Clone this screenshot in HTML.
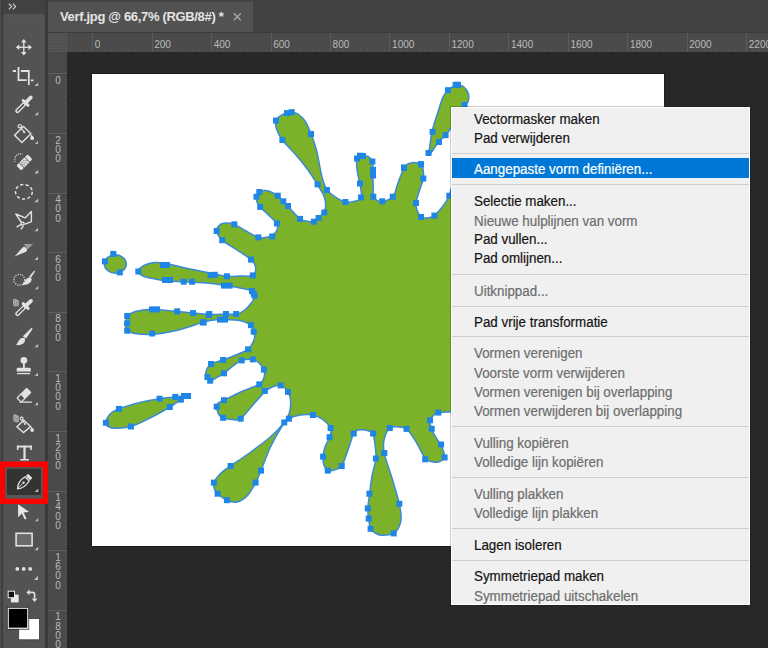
<!DOCTYPE html>
<html><head><meta charset="utf-8"><style>
*{margin:0;padding:0;box-sizing:border-box}
html,body{width:768px;height:648px;overflow:hidden;background:#282828;font-family:"Liberation Sans",sans-serif;position:relative}
.a{position:absolute}
#tabbar{left:48px;top:0;width:720px;height:32px;background:#424242}
#tab{left:48px;top:2px;width:205px;height:30px;background:#525252}
#title{left:60px;top:0;height:32px;line-height:33px;font-weight:bold;font-size:13px;letter-spacing:-0.33px;color:#e4e4e4;white-space:nowrap}
#hr{left:48px;top:32px;width:720px;height:20px;background:#4a4a4a;border-top:1px solid #3c3c3c;overflow:hidden}
#corner{left:48px;top:33px;width:19px;height:19px;background:#4f4f4f;background-image:repeating-linear-gradient(90deg,rgba(255,255,255,0.03) 0 1px,transparent 1px 3px),repeating-linear-gradient(0deg,rgba(255,255,255,0.03) 0 1px,transparent 1px 3px)}
#vr{left:48px;top:52px;width:19px;height:596px;background:#4a4a4a;overflow:hidden}
.ht{position:absolute;top:0;width:1px;height:20px;background:#5c5c5c}
.hm{position:absolute;bottom:0;width:1px;background:#555}
.hl{position:absolute;top:6px;font-size:10px;line-height:11px;color:#bcbcbc}
.vt{position:absolute;left:0;height:1px;width:19px;background:#5e5e5e}
.vm{position:absolute;right:0;height:1px;background:#555}
.vl{position:absolute;left:7px;width:6px;text-align:center;font-size:10px;line-height:9.3px;color:#bcbcbc}
#doc{left:92px;top:74px;width:572px;height:472px;background:#fff;box-shadow:0 0 0 1px #1e1e1e}
#menu{left:450px;top:106px;width:301px;height:500px;background:#f0f0f0;border:1px solid rgba(0,0,0,0.2);background-clip:padding-box;box-shadow:inset 0 0 0 1px #fff}
.i{position:absolute;left:23px;height:19px;line-height:19px;font-size:14px;color:#141414;white-space:nowrap;transform:scaleX(0.955);transform-origin:0 0;-webkit-text-stroke:0.2px currentColor}
.d{color:#6d6d6d}
.h{color:#fff}
#hl{left:1px;top:51px;width:297px;height:20px;background:#0078d7}
.s{position:absolute;left:1px;width:297px;height:1px;background:#cdcdcd}

</style></head><body>
<div class="a" id="tabbar"></div>
<div class="a" id="tab"></div>
<div class="a" id="title">Verf.jpg @ 66,7% (RGB/8#) *</div>
<svg class="a" style="left:232px;top:12px" width="11" height="10"><path d="M1.8,1.3L8.8,8.3M8.8,1.3L1.8,8.3" stroke="#a9a9a9" stroke-width="1.3"/></svg>
<div class="a" id="hr"><div class="ht" style="left:44.2px"></div><div class="hl" style="left:46.8px">0</div><div class="ht" style="left:103.7px"></div><div class="hl" style="left:106.2px">200</div><div class="ht" style="left:163.1px"></div><div class="hl" style="left:165.7px">400</div><div class="ht" style="left:222.6px"></div><div class="hl" style="left:225.2px">600</div><div class="ht" style="left:282.0px"></div><div class="hl" style="left:284.6px">800</div><div class="ht" style="left:341.4px"></div><div class="hl" style="left:344.1px">1000</div><div class="ht" style="left:400.9px"></div><div class="hl" style="left:403.5px">1200</div><div class="ht" style="left:460.4px"></div><div class="hl" style="left:463.0px">1400</div><div class="ht" style="left:519.8px"></div><div class="hl" style="left:522.4px">1600</div><div class="ht" style="left:579.3px"></div><div class="hl" style="left:581.9px">1800</div><div class="ht" style="left:638.7px"></div><div class="hl" style="left:641.3px">2000</div><div class="ht" style="left:698.2px"></div><div class="hl" style="left:700.8px">2200</div><div class="hm" style="left:20.4px;height:2.5px"></div><div class="hm" style="left:26.4px;height:2.5px"></div><div class="hm" style="left:32.3px;height:2.5px"></div><div class="hm" style="left:38.3px;height:2.5px"></div><div class="hm" style="left:50.1px;height:2.5px"></div><div class="hm" style="left:56.1px;height:2.5px"></div><div class="hm" style="left:62.0px;height:2.5px"></div><div class="hm" style="left:68.0px;height:2.5px"></div><div class="hm" style="left:73.9px;height:4px"></div><div class="hm" style="left:79.9px;height:2.5px"></div><div class="hm" style="left:85.8px;height:2.5px"></div><div class="hm" style="left:91.8px;height:2.5px"></div><div class="hm" style="left:97.7px;height:2.5px"></div><div class="hm" style="left:109.6px;height:2.5px"></div><div class="hm" style="left:115.5px;height:2.5px"></div><div class="hm" style="left:121.5px;height:2.5px"></div><div class="hm" style="left:127.4px;height:2.5px"></div><div class="hm" style="left:133.4px;height:4px"></div><div class="hm" style="left:139.3px;height:2.5px"></div><div class="hm" style="left:145.3px;height:2.5px"></div><div class="hm" style="left:151.2px;height:2.5px"></div><div class="hm" style="left:157.2px;height:2.5px"></div><div class="hm" style="left:169.0px;height:2.5px"></div><div class="hm" style="left:175.0px;height:2.5px"></div><div class="hm" style="left:180.9px;height:2.5px"></div><div class="hm" style="left:186.9px;height:2.5px"></div><div class="hm" style="left:192.8px;height:4px"></div><div class="hm" style="left:198.8px;height:2.5px"></div><div class="hm" style="left:204.7px;height:2.5px"></div><div class="hm" style="left:210.7px;height:2.5px"></div><div class="hm" style="left:216.6px;height:2.5px"></div><div class="hm" style="left:228.5px;height:2.5px"></div><div class="hm" style="left:234.4px;height:2.5px"></div><div class="hm" style="left:240.4px;height:2.5px"></div><div class="hm" style="left:246.3px;height:2.5px"></div><div class="hm" style="left:252.3px;height:4px"></div><div class="hm" style="left:258.2px;height:2.5px"></div><div class="hm" style="left:264.2px;height:2.5px"></div><div class="hm" style="left:270.1px;height:2.5px"></div><div class="hm" style="left:276.1px;height:2.5px"></div><div class="hm" style="left:287.9px;height:2.5px"></div><div class="hm" style="left:293.9px;height:2.5px"></div><div class="hm" style="left:299.8px;height:2.5px"></div><div class="hm" style="left:305.8px;height:2.5px"></div><div class="hm" style="left:311.7px;height:4px"></div><div class="hm" style="left:317.7px;height:2.5px"></div><div class="hm" style="left:323.6px;height:2.5px"></div><div class="hm" style="left:329.6px;height:2.5px"></div><div class="hm" style="left:335.5px;height:2.5px"></div><div class="hm" style="left:347.4px;height:2.5px"></div><div class="hm" style="left:353.3px;height:2.5px"></div><div class="hm" style="left:359.3px;height:2.5px"></div><div class="hm" style="left:365.2px;height:2.5px"></div><div class="hm" style="left:371.2px;height:4px"></div><div class="hm" style="left:377.1px;height:2.5px"></div><div class="hm" style="left:383.1px;height:2.5px"></div><div class="hm" style="left:389.0px;height:2.5px"></div><div class="hm" style="left:395.0px;height:2.5px"></div><div class="hm" style="left:406.8px;height:2.5px"></div><div class="hm" style="left:412.8px;height:2.5px"></div><div class="hm" style="left:418.7px;height:2.5px"></div><div class="hm" style="left:424.7px;height:2.5px"></div><div class="hm" style="left:430.6px;height:4px"></div><div class="hm" style="left:436.6px;height:2.5px"></div><div class="hm" style="left:442.5px;height:2.5px"></div><div class="hm" style="left:448.5px;height:2.5px"></div><div class="hm" style="left:454.4px;height:2.5px"></div><div class="hm" style="left:466.3px;height:2.5px"></div><div class="hm" style="left:472.2px;height:2.5px"></div><div class="hm" style="left:478.2px;height:2.5px"></div><div class="hm" style="left:484.1px;height:2.5px"></div><div class="hm" style="left:490.1px;height:4px"></div><div class="hm" style="left:496.0px;height:2.5px"></div><div class="hm" style="left:502.0px;height:2.5px"></div><div class="hm" style="left:507.9px;height:2.5px"></div><div class="hm" style="left:513.9px;height:2.5px"></div><div class="hm" style="left:525.7px;height:2.5px"></div><div class="hm" style="left:531.7px;height:2.5px"></div><div class="hm" style="left:537.6px;height:2.5px"></div><div class="hm" style="left:543.6px;height:2.5px"></div><div class="hm" style="left:549.5px;height:4px"></div><div class="hm" style="left:555.5px;height:2.5px"></div><div class="hm" style="left:561.4px;height:2.5px"></div><div class="hm" style="left:567.4px;height:2.5px"></div><div class="hm" style="left:573.3px;height:2.5px"></div><div class="hm" style="left:585.2px;height:2.5px"></div><div class="hm" style="left:591.1px;height:2.5px"></div><div class="hm" style="left:597.1px;height:2.5px"></div><div class="hm" style="left:603.0px;height:2.5px"></div><div class="hm" style="left:609.0px;height:4px"></div><div class="hm" style="left:614.9px;height:2.5px"></div><div class="hm" style="left:620.9px;height:2.5px"></div><div class="hm" style="left:626.8px;height:2.5px"></div><div class="hm" style="left:632.8px;height:2.5px"></div><div class="hm" style="left:644.6px;height:2.5px"></div><div class="hm" style="left:650.6px;height:2.5px"></div><div class="hm" style="left:656.5px;height:2.5px"></div><div class="hm" style="left:662.5px;height:2.5px"></div><div class="hm" style="left:668.4px;height:4px"></div><div class="hm" style="left:674.4px;height:2.5px"></div><div class="hm" style="left:680.3px;height:2.5px"></div><div class="hm" style="left:686.3px;height:2.5px"></div><div class="hm" style="left:692.2px;height:2.5px"></div><div class="hm" style="left:704.1px;height:2.5px"></div><div class="hm" style="left:710.0px;height:2.5px"></div><div class="hm" style="left:716.0px;height:2.5px"></div></div>
<div class="a" id="corner"></div>
<div class="a" id="vr"><div class="vt" style="top:21.3px"></div><div class="vl" style="top:23.9px">0</div><div class="vm" style="top:27.3px;width:2.5px"></div><div class="vm" style="top:33.2px;width:2.5px"></div><div class="vm" style="top:39.2px;width:2.5px"></div><div class="vm" style="top:45.1px;width:2.5px"></div><div class="vm" style="top:51.1px;width:4px"></div><div class="vm" style="top:57.1px;width:2.5px"></div><div class="vm" style="top:63.0px;width:2.5px"></div><div class="vm" style="top:69.0px;width:2.5px"></div><div class="vm" style="top:74.9px;width:2.5px"></div><div class="vt" style="top:80.9px"></div><div class="vl" style="top:83.5px">2<br>0<br>0</div><div class="vm" style="top:86.9px;width:2.5px"></div><div class="vm" style="top:92.8px;width:2.5px"></div><div class="vm" style="top:98.8px;width:2.5px"></div><div class="vm" style="top:104.7px;width:2.5px"></div><div class="vm" style="top:110.7px;width:4px"></div><div class="vm" style="top:116.7px;width:2.5px"></div><div class="vm" style="top:122.6px;width:2.5px"></div><div class="vm" style="top:128.6px;width:2.5px"></div><div class="vm" style="top:134.5px;width:2.5px"></div><div class="vt" style="top:140.5px"></div><div class="vl" style="top:143.1px">4<br>0<br>0</div><div class="vm" style="top:146.5px;width:2.5px"></div><div class="vm" style="top:152.4px;width:2.5px"></div><div class="vm" style="top:158.4px;width:2.5px"></div><div class="vm" style="top:164.3px;width:2.5px"></div><div class="vm" style="top:170.3px;width:4px"></div><div class="vm" style="top:176.3px;width:2.5px"></div><div class="vm" style="top:182.2px;width:2.5px"></div><div class="vm" style="top:188.2px;width:2.5px"></div><div class="vm" style="top:194.1px;width:2.5px"></div><div class="vt" style="top:200.1px"></div><div class="vl" style="top:202.7px">6<br>0<br>0</div><div class="vm" style="top:206.1px;width:2.5px"></div><div class="vm" style="top:212.0px;width:2.5px"></div><div class="vm" style="top:218.0px;width:2.5px"></div><div class="vm" style="top:223.9px;width:2.5px"></div><div class="vm" style="top:229.9px;width:4px"></div><div class="vm" style="top:235.9px;width:2.5px"></div><div class="vm" style="top:241.8px;width:2.5px"></div><div class="vm" style="top:247.8px;width:2.5px"></div><div class="vm" style="top:253.7px;width:2.5px"></div><div class="vt" style="top:259.7px"></div><div class="vl" style="top:262.3px">8<br>0<br>0</div><div class="vm" style="top:265.7px;width:2.5px"></div><div class="vm" style="top:271.6px;width:2.5px"></div><div class="vm" style="top:277.6px;width:2.5px"></div><div class="vm" style="top:283.5px;width:2.5px"></div><div class="vm" style="top:289.5px;width:4px"></div><div class="vm" style="top:295.5px;width:2.5px"></div><div class="vm" style="top:301.4px;width:2.5px"></div><div class="vm" style="top:307.4px;width:2.5px"></div><div class="vm" style="top:313.3px;width:2.5px"></div><div class="vt" style="top:319.3px"></div><div class="vl" style="top:321.9px">1<br>0<br>0<br>0</div><div class="vm" style="top:325.3px;width:2.5px"></div><div class="vm" style="top:331.2px;width:2.5px"></div><div class="vm" style="top:337.2px;width:2.5px"></div><div class="vm" style="top:343.1px;width:2.5px"></div><div class="vm" style="top:349.1px;width:4px"></div><div class="vm" style="top:355.1px;width:2.5px"></div><div class="vm" style="top:361.0px;width:2.5px"></div><div class="vm" style="top:367.0px;width:2.5px"></div><div class="vm" style="top:372.9px;width:2.5px"></div><div class="vt" style="top:378.9px"></div><div class="vl" style="top:381.5px">1<br>2<br>0<br>0</div><div class="vm" style="top:384.9px;width:2.5px"></div><div class="vm" style="top:390.8px;width:2.5px"></div><div class="vm" style="top:396.8px;width:2.5px"></div><div class="vm" style="top:402.7px;width:2.5px"></div><div class="vm" style="top:408.7px;width:4px"></div><div class="vm" style="top:414.7px;width:2.5px"></div><div class="vm" style="top:420.6px;width:2.5px"></div><div class="vm" style="top:426.6px;width:2.5px"></div><div class="vm" style="top:432.5px;width:2.5px"></div><div class="vt" style="top:438.5px"></div><div class="vl" style="top:441.1px">1<br>4<br>0<br>0</div><div class="vm" style="top:444.5px;width:2.5px"></div><div class="vm" style="top:450.4px;width:2.5px"></div><div class="vm" style="top:456.4px;width:2.5px"></div><div class="vm" style="top:462.3px;width:2.5px"></div><div class="vm" style="top:468.3px;width:4px"></div><div class="vm" style="top:474.3px;width:2.5px"></div><div class="vm" style="top:480.2px;width:2.5px"></div><div class="vm" style="top:486.2px;width:2.5px"></div><div class="vm" style="top:492.1px;width:2.5px"></div><div class="vt" style="top:498.1px"></div><div class="vl" style="top:500.7px">1<br>6<br>0<br>0</div><div class="vm" style="top:504.1px;width:2.5px"></div><div class="vm" style="top:510.0px;width:2.5px"></div><div class="vm" style="top:516.0px;width:2.5px"></div><div class="vm" style="top:521.9px;width:2.5px"></div><div class="vm" style="top:527.9px;width:4px"></div><div class="vm" style="top:533.9px;width:2.5px"></div><div class="vm" style="top:539.8px;width:2.5px"></div><div class="vm" style="top:545.8px;width:2.5px"></div><div class="vm" style="top:551.7px;width:2.5px"></div><div class="vt" style="top:557.7px"></div><div class="vl" style="top:560.3px">1<br>8<br>0<br>0</div><div class="vm" style="top:563.7px;width:2.5px"></div><div class="vm" style="top:569.6px;width:2.5px"></div><div class="vm" style="top:575.6px;width:2.5px"></div><div class="vm" style="top:581.5px;width:2.5px"></div><div class="vm" style="top:587.5px;width:4px"></div><div class="vm" style="top:593.5px;width:2.5px"></div><div class="vm" style="top:599.4px;width:2.5px"></div><div class="vm" style="top:605.4px;width:2.5px"></div><div class="vm" style="top:611.3px;width:2.5px"></div></div>
<div class="a" id="doc"></div>
<svg class="a" id="splat" style="left:0;top:0" width="768" height="648"><path d="M470.0,186.0C467.5,148.5 458.2,185.5 455.0,186.0C451.8,186.5 451.9,187.4 451.0,189.0C450.1,190.6 450.6,192.9 449.3,195.7C448.0,198.5 445.5,202.7 443.0,206.0C440.5,209.3 437.1,213.6 434.4,215.6C431.7,217.6 429.2,217.8 427.0,218.0C424.8,218.2 422.7,218.3 421.0,217.0C419.3,215.7 417.8,212.3 417.0,210.0C416.2,207.7 415.7,206.0 416.0,203.0C416.3,200.0 417.8,196.1 419.0,192.0C420.2,187.9 422.6,182.3 423.3,178.5C424.0,174.7 423.4,171.4 423.0,169.0C422.6,166.6 422.5,165.4 421.0,164.3C419.5,163.2 416.2,162.5 414.0,162.4C411.8,162.3 409.7,163.1 408.0,164.0C406.3,164.9 405.7,164.8 404.0,168.0C402.3,171.2 399.9,178.2 398.0,183.0C396.1,187.8 395.4,193.6 392.8,196.7C390.2,199.8 385.2,200.9 382.2,201.3C379.2,201.7 376.5,200.4 375.0,199.0C373.5,197.6 373.6,196.9 373.3,193.0C373.0,189.1 373.1,180.7 373.0,175.4C372.9,170.2 373.2,164.7 372.4,161.5C371.6,158.3 369.6,157.4 368.0,156.5C366.4,155.6 364.4,156.1 363.0,156.0C361.6,155.9 360.4,155.4 359.4,156.0C358.3,156.6 357.1,157.3 356.7,159.5C356.3,161.7 356.6,165.6 357.0,169.0C357.4,172.4 358.4,177.2 359.0,180.0C359.6,182.8 360.0,183.1 360.4,186.0C360.8,188.9 362.0,195.1 361.3,197.6C360.6,200.1 358.6,200.3 356.0,201.0C353.4,201.7 348.8,202.7 345.4,202.0C342.0,201.3 338.5,199.1 335.4,197.0C332.3,194.9 329.0,192.9 326.8,189.6C324.6,186.3 323.7,183.4 322.0,177.0C320.3,170.6 318.5,158.2 316.7,151.0C314.9,143.8 312.9,139.0 311.0,134.0C309.1,129.0 307.2,124.3 305.0,121.0C302.8,117.7 300.2,115.5 298.0,114.0C295.8,112.5 293.5,112.4 291.7,112.2C289.9,112.0 288.9,112.4 287.0,113.0C285.1,113.6 281.8,114.7 280.0,116.0C278.2,117.3 276.6,118.4 276.0,120.6C275.4,122.8 275.4,125.8 276.5,129.0C277.6,132.2 279.1,135.7 282.4,140.0C285.6,144.3 291.7,150.0 296.0,155.0C300.3,160.0 304.4,165.1 308.0,170.0C311.6,174.9 314.8,180.2 317.5,184.7C320.2,189.2 322.9,193.3 324.3,197.0C325.7,200.7 325.8,204.3 325.6,207.0C325.4,209.7 324.1,211.2 323.0,213.0C321.9,214.8 320.2,216.6 318.8,218.0C317.4,219.4 316.5,221.2 314.4,221.7C312.3,222.2 308.5,221.5 306.0,221.0C303.5,220.5 302.7,221.2 299.6,218.6C296.5,216.0 290.1,208.6 287.3,205.7C284.5,202.8 284.6,203.1 283.0,201.4C281.4,199.8 279.6,197.5 277.4,195.8C275.2,194.2 272.2,192.4 270.0,191.5C267.8,190.6 265.8,190.4 264.0,190.5C262.2,190.6 260.6,191.0 259.3,192.0C258.1,193.0 256.9,195.0 256.5,196.7C256.1,198.4 256.4,200.3 257.0,202.0C257.6,203.7 258.2,204.7 260.2,206.9C262.2,209.2 266.2,212.7 269.0,215.5C271.8,218.3 275.6,221.1 276.9,223.5C278.2,225.9 277.7,228.0 277.0,230.0C276.3,232.0 274.5,234.1 272.5,235.3C270.5,236.6 267.4,237.2 265.0,237.5C262.6,237.8 261.5,238.5 258.3,237.4C255.1,236.3 250.0,233.2 246.0,231.0C242.0,228.8 237.6,225.7 234.3,224.4C231.0,223.1 228.3,223.0 226.0,223.0C223.7,223.0 222.0,223.1 220.4,224.4C218.8,225.7 216.4,228.4 216.7,231.0C217.0,233.6 218.8,237.0 222.2,240.2C225.6,243.4 232.2,246.8 237.0,250.0C241.8,253.2 247.9,256.8 251.0,259.6C254.1,262.4 255.3,264.4 255.6,267.0C255.9,269.6 255.4,273.9 252.8,275.4C250.2,276.9 244.3,275.9 240.0,276.0C235.7,276.1 231.6,276.8 226.9,276.3C222.2,275.9 216.5,274.2 212.0,273.3C207.5,272.4 204.6,271.9 200.0,271.0C195.4,270.1 190.3,269.1 184.6,267.8C178.9,266.6 170.9,264.4 166.0,263.5C161.1,262.6 158.1,262.4 155.0,262.5C151.9,262.6 150.1,263.1 147.6,264.0C145.1,264.9 141.6,266.8 140.0,268.0C138.4,269.2 138.1,270.3 138.3,271.5C138.5,272.7 139.4,274.0 141.0,275.0C142.6,276.0 143.4,276.6 147.6,277.5C151.8,278.4 160.0,280.0 166.0,280.7C172.0,281.4 179.4,281.4 183.7,281.7C188.0,281.9 187.3,281.9 192.0,282.2C196.7,282.5 206.7,282.9 212.0,283.5C217.3,284.1 221.1,285.2 224.0,285.6C226.9,286.0 226.9,285.6 229.6,286.0C232.3,286.4 236.3,287.2 240.0,288.0C243.7,288.8 249.5,289.7 251.9,291.0C254.3,292.3 254.3,294.5 254.6,295.7C254.9,296.9 254.0,297.1 253.7,298.0C253.4,298.9 254.1,299.2 252.8,301.0C251.5,302.8 248.6,306.8 246.0,309.0C243.4,311.2 240.3,313.2 237.0,314.0C233.7,314.8 230.2,313.9 226.0,314.0C221.8,314.1 217.3,314.6 212.0,314.5C206.7,314.4 199.7,313.6 193.9,313.1C188.1,312.6 183.7,311.9 177.2,311.3C170.7,310.7 159.9,309.7 155.0,309.4C150.1,309.1 151.1,309.2 147.6,309.6C144.1,310.0 137.3,310.9 134.0,312.0C130.7,313.1 129.4,314.1 128.0,316.0C126.5,317.9 125.4,321.0 125.3,323.3C125.2,325.6 125.6,328.3 127.2,330.0C128.8,331.7 130.8,332.8 135.0,333.5C139.2,334.2 145.5,334.9 152.2,334.4C158.9,333.9 166.8,332.7 175.3,330.7C183.8,328.7 196.9,324.1 203.0,322.4C209.1,320.6 208.8,320.7 212.0,320.2C215.2,319.7 218.4,319.6 222.2,319.6C226.0,319.6 231.4,319.7 235.0,320.0C238.6,320.3 240.8,320.6 243.5,321.5C246.2,322.4 249.2,323.5 250.9,325.2C252.6,326.9 253.1,329.6 253.7,331.7C254.3,333.8 254.9,335.9 254.6,338.0C254.3,340.1 253.1,342.1 252.0,344.0C250.9,345.9 250.8,347.5 248.1,349.3C245.4,351.1 240.2,353.2 236.0,355.0C231.8,356.8 227.2,358.5 223.1,360.0C218.9,361.5 213.8,362.5 211.1,364.0C208.4,365.5 207.9,367.2 207.0,369.0C206.1,370.8 205.5,373.5 205.6,375.0C205.7,376.5 206.6,377.1 207.4,378.0C208.2,378.9 208.8,380.7 210.2,380.7C211.6,380.7 213.7,379.2 216.0,378.0C218.3,376.8 221.2,375.3 224.0,373.3C226.8,371.3 230.1,368.1 233.0,366.0C235.9,363.9 238.4,361.5 241.7,360.4C245.0,359.3 249.9,359.0 252.8,359.4C255.7,359.8 257.1,361.3 259.0,363.0C260.9,364.7 263.0,367.6 263.9,369.6C264.8,371.6 264.6,373.3 264.5,375.0C264.4,376.7 263.9,378.4 263.0,380.0C262.1,381.6 262.6,382.6 259.3,384.4C256.0,386.2 248.9,388.4 243.0,391.0C237.1,393.6 228.2,398.2 224.0,400.2C219.8,402.2 219.2,401.9 218.0,403.0C216.8,404.1 216.6,404.9 216.7,406.7C216.8,408.5 217.4,412.1 218.5,414.0C219.6,415.9 220.8,416.9 223.1,417.8C225.3,418.7 229.1,419.4 232.0,419.5C234.9,419.6 237.4,420.9 240.7,418.7C244.0,416.4 248.0,410.5 252.0,406.0C256.0,401.5 261.5,395.1 264.8,391.9C268.1,388.7 269.4,388.1 272.0,387.0C274.6,385.9 277.9,384.6 280.6,385.4C283.3,386.2 286.3,389.1 288.0,391.9C289.7,394.7 290.5,398.3 290.7,402.0C290.9,405.7 290.1,410.6 289.0,414.0C287.9,417.4 287.5,418.5 284.3,422.4C281.1,426.3 276.1,432.0 270.0,437.3C263.9,442.6 254.6,449.2 248.0,454.0C241.4,458.8 235.3,462.7 230.6,466.0C225.9,469.3 222.8,471.2 220.0,474.0C217.2,476.8 214.8,480.1 213.9,482.6C213.0,485.1 213.9,487.1 214.5,489.0C215.1,490.9 215.5,491.8 217.6,493.7C219.7,495.6 223.7,498.8 226.9,500.2C230.1,501.6 233.7,502.7 237.0,502.0C240.3,501.3 243.9,499.2 247.0,496.0C250.1,492.8 253.3,486.8 255.6,482.6C257.9,478.4 258.6,476.4 261.0,470.6C263.4,464.8 266.6,455.3 270.0,448.0C273.4,440.7 278.4,431.9 281.5,427.0C284.6,422.1 285.8,420.7 288.9,418.7C292.0,416.7 296.0,415.6 300.0,415.0C304.0,414.4 309.3,414.3 313.0,415.0C316.7,415.7 319.1,416.8 322.0,419.0C324.9,421.2 329.3,425.0 330.6,428.0C331.9,431.0 330.5,434.0 329.6,437.2C328.7,440.4 326.1,443.8 325.0,447.0C323.9,450.2 323.3,453.7 323.1,456.7C322.9,459.7 323.2,462.7 324.0,465.0C324.8,467.3 326.1,469.8 327.8,470.6C329.5,471.4 331.7,470.8 334.0,470.0C336.3,469.2 339.4,469.3 341.7,466.0C344.0,462.7 346.0,455.4 348.0,450.0C350.0,444.6 352.0,436.8 353.7,433.5C355.4,430.2 356.4,430.6 358.0,430.0C359.6,429.4 361.2,429.6 363.0,429.8C364.8,430.0 367.3,430.4 369.0,431.0C370.7,431.6 372.1,431.2 373.1,433.5C374.1,435.8 374.5,440.8 375.0,445.0C375.5,449.2 376.4,453.3 375.9,458.5C375.4,463.7 373.1,470.1 372.0,476.0C370.9,481.9 370.3,488.2 369.6,493.6C368.9,499.0 368.0,504.2 367.8,508.4C367.6,512.6 368.2,515.2 368.7,518.6C369.2,522.0 369.4,526.3 370.6,528.8C371.8,531.3 374.0,532.4 376.0,533.5C378.0,534.6 379.7,535.3 382.6,535.3C385.6,535.3 391.0,534.8 393.7,533.4C396.4,532.0 397.8,529.5 399.0,527.0C400.2,524.5 401.1,522.5 401.1,518.6C401.2,514.7 400.8,510.6 399.3,503.8C397.8,497.0 394.5,486.3 392.0,478.0C389.5,469.7 385.7,460.1 384.4,453.8C383.1,447.5 383.1,444.3 384.0,440.0C384.9,435.7 387.5,430.2 389.8,428.0C392.1,425.8 395.2,426.9 398.0,427.0C400.8,427.1 403.7,426.8 406.5,428.9C409.3,431.0 412.2,435.8 414.7,439.7C417.2,443.6 419.6,448.8 421.5,452.0C423.4,455.2 424.1,457.6 425.8,459.2C427.6,460.8 429.9,461.3 432.0,461.8C434.1,462.3 436.2,462.7 438.3,462.0C440.4,461.3 443.8,459.5 444.6,457.5C445.4,455.5 443.7,452.1 443.0,450.0C442.3,447.9 441.9,447.3 440.4,444.6C438.9,441.9 435.5,436.7 434.0,434.0C432.5,431.3 432.1,430.9 431.4,428.6C430.7,426.3 429.6,422.6 430.0,420.3C430.4,418.0 432.6,416.3 434.0,415.0C435.4,413.7 435.5,413.2 438.3,412.6C441.1,412.1 448.2,412.0 451.0,411.7C453.8,411.4 451.8,411.1 455.0,411.0C458.2,410.9 467.5,448.5 470.0,411.0C472.5,373.5 472.5,223.5 470.0,186.0Z" fill="#7cb22a" stroke="#3a8ad8" stroke-width="1.5"/><path d="M105.9,422.8C106.2,420.7 107.8,416.3 110.0,414.0C112.2,411.7 113.9,410.8 118.9,408.9C123.9,407.0 133.2,404.2 140.0,402.5C146.8,400.8 153.7,399.6 159.6,398.7C165.5,397.8 170.8,397.3 175.3,396.9C179.8,396.4 184.3,396.1 186.4,396.0C188.5,395.9 188.9,395.9 188.0,396.5C187.1,397.1 183.9,397.9 180.9,399.6C177.9,401.4 175.0,403.9 169.8,407.0C164.7,410.1 156.5,414.8 150.0,418.0C143.5,421.2 136.6,424.8 130.9,426.5C125.2,428.2 119.8,428.3 116.0,428.3C112.2,428.3 109.7,427.4 108.0,426.5C106.3,425.6 105.6,424.9 105.9,422.8Z" fill="#7cb22a" stroke="#3a8ad8" stroke-width="1.5"/><path d="M429.0,152.7C429.0,151.2 429.5,148.7 430.0,145.0C430.5,141.3 430.9,136.3 432.2,130.8C433.5,125.3 436.2,117.6 438.0,112.0C439.8,106.4 441.3,100.6 443.0,97.0C444.7,93.4 445.9,92.2 448.0,90.2C450.1,88.2 453.9,85.7 455.6,84.8C457.3,83.9 456.6,84.4 458.0,84.8C459.4,85.2 462.2,85.5 464.0,87.0C465.8,88.5 467.8,91.5 468.5,94.0C469.2,96.5 468.6,100.2 468.0,102.0C467.4,103.8 465.9,102.8 464.6,105.0C463.3,107.2 462.3,111.2 460.0,115.0C457.7,118.8 453.4,124.7 451.0,128.0C448.6,131.3 447.7,132.7 445.6,135.0C443.5,137.3 440.7,139.5 438.6,142.0C436.5,144.5 434.4,148.0 433.0,150.0C431.6,152.0 430.7,153.6 430.0,154.0C429.3,154.4 429.0,154.2 429.0,152.7Z" fill="#7cb22a" stroke="#3a8ad8" stroke-width="1.5"/><ellipse cx="115.3" cy="264" rx="11" ry="9.2" fill="#7cb22a" stroke="#3a8ad8" stroke-width="1.5"/><g fill="#1f86e6"><rect x="284.0" y="110.1" width="6" height="6"/><rect x="288.7" y="109.2" width="6" height="6"/><rect x="273.0" y="117.6" width="6" height="6"/><rect x="279.4" y="137.0" width="6" height="6"/><rect x="308.0" y="131.0" width="6" height="6"/><rect x="314.6" y="181.4" width="6" height="6"/><rect x="323.9" y="187.0" width="6" height="6"/><rect x="342.4" y="199.0" width="6" height="6"/><rect x="358.0" y="194.4" width="6" height="6"/><rect x="357.0" y="180.5" width="6" height="6"/><rect x="354.0" y="155.5" width="6" height="6"/><rect x="357.0" y="152.7" width="6" height="6"/><rect x="360.0" y="153.0" width="6" height="6"/><rect x="369.4" y="158.5" width="6" height="6"/><rect x="370.0" y="166.8" width="6" height="6"/><rect x="370.0" y="172.4" width="6" height="6"/><rect x="370.3" y="193.7" width="6" height="6"/><rect x="379.2" y="198.3" width="6" height="6"/><rect x="389.8" y="193.7" width="6" height="6"/><rect x="401.0" y="165.0" width="6" height="6"/><rect x="418.0" y="161.3" width="6" height="6"/><rect x="420.3" y="175.5" width="6" height="6"/><rect x="413.0" y="200.0" width="6" height="6"/><rect x="418.0" y="214.0" width="6" height="6"/><rect x="431.4" y="212.6" width="6" height="6"/><rect x="446.3" y="192.7" width="6" height="6"/><rect x="425.5" y="150.0" width="6" height="6"/><rect x="436.0" y="139.0" width="6" height="6"/><rect x="442.6" y="132.2" width="6" height="6"/><rect x="429.6" y="128.9" width="6" height="6"/><rect x="445.0" y="87.2" width="6" height="6"/><rect x="452.6" y="81.8" width="6" height="6"/><rect x="455.0" y="81.8" width="6" height="6"/><rect x="461.6" y="102.0" width="6" height="6"/><rect x="417.9" y="161.3" width="6" height="6"/><rect x="401.0" y="164.4" width="6" height="6"/><rect x="256.3" y="189.0" width="6" height="6"/><rect x="253.5" y="193.7" width="6" height="6"/><rect x="257.2" y="203.9" width="6" height="6"/><rect x="273.9" y="220.5" width="6" height="6"/><rect x="269.2" y="233.5" width="6" height="6"/><rect x="274.8" y="192.7" width="6" height="6"/><rect x="280.3" y="198.3" width="6" height="6"/><rect x="285.0" y="203.0" width="6" height="6"/><rect x="297.0" y="215.9" width="6" height="6"/><rect x="310.9" y="218.7" width="6" height="6"/><rect x="315.5" y="215.0" width="6" height="6"/><rect x="321.3" y="209.5" width="6" height="6"/><rect x="231.3" y="221.4" width="6" height="6"/><rect x="213.7" y="228.0" width="6" height="6"/><rect x="219.2" y="237.2" width="6" height="6"/><rect x="255.3" y="234.4" width="6" height="6"/><rect x="248.0" y="256.6" width="6" height="6"/><rect x="249.8" y="272.4" width="6" height="6"/><rect x="211.8" y="271.8" width="6" height="6"/><rect x="223.9" y="273.3" width="6" height="6"/><rect x="221.0" y="282.6" width="6" height="6"/><rect x="226.6" y="282.6" width="6" height="6"/><rect x="248.9" y="288.0" width="6" height="6"/><rect x="251.6" y="292.7" width="6" height="6"/><rect x="110.3" y="250.9" width="6" height="6"/><rect x="102.0" y="258.3" width="6" height="6"/><rect x="116.8" y="269.4" width="6" height="6"/><rect x="135.3" y="268.5" width="6" height="6"/><rect x="160.0" y="262.0" width="6" height="6"/><rect x="164.0" y="262.0" width="6" height="6"/><rect x="162.0" y="277.0" width="6" height="6"/><rect x="167.0" y="277.0" width="6" height="6"/><rect x="180.7" y="278.7" width="6" height="6"/><rect x="189.0" y="278.7" width="6" height="6"/><rect x="207.5" y="272.2" width="6" height="6"/><rect x="149.0" y="306.4" width="6" height="6"/><rect x="154.0" y="306.4" width="6" height="6"/><rect x="174.2" y="308.3" width="6" height="6"/><rect x="190.0" y="310.1" width="6" height="6"/><rect x="205.7" y="312.0" width="6" height="6"/><rect x="200.0" y="319.4" width="6" height="6"/><rect x="149.2" y="330.5" width="6" height="6"/><rect x="124.2" y="313.0" width="6" height="6"/><rect x="124.2" y="320.3" width="6" height="6"/><rect x="124.2" y="327.7" width="6" height="6"/><rect x="250.7" y="290.7" width="6" height="6"/><rect x="206.3" y="311.0" width="6" height="6"/><rect x="223.0" y="311.0" width="6" height="6"/><rect x="233.1" y="311.0" width="6" height="6"/><rect x="200.7" y="319.4" width="6" height="6"/><rect x="217.0" y="316.6" width="6" height="6"/><rect x="222.0" y="316.6" width="6" height="6"/><rect x="247.9" y="322.2" width="6" height="6"/><rect x="250.7" y="328.7" width="6" height="6"/><rect x="245.1" y="346.3" width="6" height="6"/><rect x="220.1" y="357.0" width="6" height="6"/><rect x="208.1" y="361.0" width="6" height="6"/><rect x="204.4" y="374.0" width="6" height="6"/><rect x="207.2" y="377.7" width="6" height="6"/><rect x="221.0" y="370.3" width="6" height="6"/><rect x="238.7" y="357.4" width="6" height="6"/><rect x="249.8" y="356.4" width="6" height="6"/><rect x="260.9" y="366.6" width="6" height="6"/><rect x="256.3" y="381.4" width="6" height="6"/><rect x="261.8" y="388.0" width="6" height="6"/><rect x="277.6" y="382.4" width="6" height="6"/><rect x="285.0" y="388.9" width="6" height="6"/><rect x="221.0" y="397.2" width="6" height="6"/><rect x="213.7" y="403.7" width="6" height="6"/><rect x="220.1" y="414.8" width="6" height="6"/><rect x="237.7" y="415.7" width="6" height="6"/><rect x="281.3" y="419.4" width="6" height="6"/><rect x="285.9" y="415.7" width="6" height="6"/><rect x="310.0" y="412.0" width="6" height="6"/><rect x="227.6" y="463.0" width="6" height="6"/><rect x="210.9" y="479.6" width="6" height="6"/><rect x="214.6" y="490.7" width="6" height="6"/><rect x="223.9" y="497.2" width="6" height="6"/><rect x="252.6" y="479.6" width="6" height="6"/><rect x="258.0" y="467.6" width="6" height="6"/><rect x="327.6" y="425.0" width="6" height="6"/><rect x="326.6" y="434.2" width="6" height="6"/><rect x="320.1" y="453.7" width="6" height="6"/><rect x="324.8" y="467.6" width="6" height="6"/><rect x="338.7" y="463.0" width="6" height="6"/><rect x="350.7" y="430.5" width="6" height="6"/><rect x="370.1" y="430.5" width="6" height="6"/><rect x="372.9" y="455.5" width="6" height="6"/><rect x="381.3" y="450.0" width="6" height="6"/><rect x="386.8" y="425.0" width="6" height="6"/><rect x="403.5" y="425.9" width="6" height="6"/><rect x="366.4" y="490.7" width="6" height="6"/><rect x="364.8" y="505.4" width="6" height="6"/><rect x="365.7" y="515.6" width="6" height="6"/><rect x="367.6" y="525.8" width="6" height="6"/><rect x="390.7" y="530.4" width="6" height="6"/><rect x="396.3" y="500.8" width="6" height="6"/><rect x="428.7" y="425.8" width="6" height="6"/><rect x="438.0" y="441.5" width="6" height="6"/><rect x="441.6" y="454.5" width="6" height="6"/><rect x="422.2" y="456.3" width="6" height="6"/><rect x="435.3" y="409.6" width="6" height="6"/><rect x="427.0" y="417.3" width="6" height="6"/><rect x="102.9" y="419.8" width="6" height="6"/><rect x="115.9" y="405.9" width="6" height="6"/><rect x="156.6" y="395.7" width="6" height="6"/><rect x="172.3" y="393.9" width="6" height="6"/><rect x="181.0" y="393.0" width="6" height="6"/><rect x="185.0" y="393.0" width="6" height="6"/><rect x="177.9" y="396.6" width="6" height="6"/><rect x="166.8" y="404.0" width="6" height="6"/><rect x="127.9" y="423.5" width="6" height="6"/></g></svg>
<svg class="a" style="left:0;top:0" width="48" height="648" viewBox="0 0 48 648">
<rect x="0" y="0" width="48" height="648" fill="#4c4c4c"/>
<rect x="1.5" y="0" width="1.5" height="648" fill="#3a3a3a"/>
<rect x="45" y="0" width="3" height="648" fill="#3a3a3a"/>
<rect x="3" y="0" width="42" height="14" fill="#424242"/>
<path d="M3,16 a2,2 0 0 1 2,-2 H43 a2,2 0 0 1 2,2 V648 H3Z" fill="#535353"/>
<g stroke="#5b5b5b" stroke-width="0.6"><path d="M15,16V24M17,16V24M19,16V24M21,16V24M23,16V24M25,16V24M27,16V24M29,16V24M31,16V24M33,16V24"/></g>
<g fill="none" stroke="#cdcdcd" stroke-width="1.1"><path d="M8.8,3.6L11.7,6.5L8.8,9.4M12.8,3.6L15.7,6.5L12.8,9.4"/></g>
<g fill="#e2e2e2" stroke="none">
<!-- move -->
<rect x="17" y="46.6" width="13.6" height="1.3"/><rect x="23.15" y="40.5" width="1.3" height="13.6"/>
<path d="M23.8,38.9L21,42.5H26.6ZM23.8,55.4L21,51.9H26.6ZM15.8,47.2L19.3,44.4V50ZM32,47.2L28.5,44.4V50Z"/>
</g>
<g fill="none" stroke="#e2e2e2" stroke-width="1.8">
<!-- crop -->
<path d="M18.5,66.9V80.2H26.7M12.8,71H16M20.9,71H28.8V84.9M30.8,80.4H33.6"/>
</g>
<g fill="#bdbdbd">
<path d="M38.2,82.4V86H34.5Z"/>
<path d="M38.2,111.8V115.2H34.6Z"/>
<path d="M38,140.8V143.9H35Z"/>
<path d="M38.2,169.8V173.4H34.3Z"/>
<path d="M38.2,198.5V202.2H34.3Z"/>
<path d="M38,227.8V231.2H34.5Z"/>
<path d="M38,256.5V260H34.5Z"/>
<path d="M38.2,285.8V289.2H35Z"/>
<path d="M38.2,344V347.3H34.3Z"/>
<path d="M38,372.8V376.1H34.5Z"/>
<path d="M38,402V405.3H34.3Z"/>
<path d="M38.2,488.5V492H34.7Z"/>
<path d="M38.2,518V521.2H35Z"/>
<path d="M38.2,546.8V550.3H34.5Z"/>
<path d="M38,575.8V580H33.8Z"/>
</g>
<!-- eyedropper -->
<g stroke-linecap="round" fill="none">
<path d="M17.4,110.9L24.6,103.7" stroke="#e2e2e2" stroke-width="4.4"/>
<path d="M17.6,110.7L23.5,104.8" stroke="#535353" stroke-width="1.8"/>
<path d="M25.5,102.8L30.8,97.5" stroke="#e2e2e2" stroke-width="3.8"/>
<path d="M23.2,100.5L28,105.3" stroke="#e2e2e2" stroke-width="3"/>
</g>
<!-- bucket -->
<g fill="none" stroke="#e2e2e2" stroke-width="1.4">
<path d="M14.6,135.2L23.5,126.4L30.9,133.8L21.9,142.5Z"/>
<circle cx="19.8" cy="126.2" r="1.7" stroke-width="1.2"/>
<path d="M20.8,127.6L24.2,132" stroke-width="1.2"/>
</g>
<g fill="#e2e2e2"><circle cx="24.2" cy="132.2" r="1.1"/><path d="M31.3,134.5C32.5,136 34.1,137 34.1,138.2A1.9,1.9 0 0 1 30.3,138.2C30.3,137 31,135.8 31.3,134.5Z"/></g>
<!-- healing -->
<g transform="translate(24.4,162.4) rotate(-45)">
<rect x="-8" y="-3.5" width="16" height="7" rx="1.6" fill="#e2e2e2"/>
<g fill="#666"><rect x="-4.3" y="-3.5" width="0.8" height="7"/><rect x="3.5" y="-3.5" width="0.8" height="7"/>
<rect x="-2.4" y="-2.2" width="1" height="1"/><rect x="0.4" y="-2.2" width="1" height="1"/><rect x="-2.4" y="1.2" width="1" height="1"/><rect x="0.4" y="1.2" width="1" height="1"/><rect x="-1" y="-0.5" width="1" height="1"/><rect x="1.8" y="-0.5" width="1" height="1"/><rect x="-3.4" y="-0.5" width="1" height="1"/></g>
</g>
<path d="M15.2,161.8A5.8,5.8 0 0 1 22.8,154.2" fill="none" stroke="#d0d0d0" stroke-width="1.3" stroke-dasharray="1.1 1.1"/>
<!-- ellipse marquee -->
<ellipse cx="23.9" cy="191.8" rx="8.4" ry="7.3" fill="none" stroke="#e2e2e2" stroke-width="1.5" stroke-dasharray="3.2 2.3"/>
<!-- lasso -->
<g fill="none" stroke="#e2e2e2" stroke-width="1.4" stroke-linejoin="round">
<path d="M21.6,222.6L15.8,214L25.3,217.8L31.4,211.5V221.6L24.4,224.4"/>
<circle cx="22.6" cy="223.6" r="1.5"/>
<path d="M16.6,227.1L21.2,224.4M21,229.4L23.2,226"/>
</g>
<!-- object select -->
<path d="M23.9,244H33.1L27.7,249.5Z" fill="#9c9c9c"/>
<path d="M14.6,256.4L22.1,247.9A2.7,2.7 0 0 1 26.1,251.7Z" fill="#e2e2e2"/>
<!-- quick selection -->
<circle cx="19.3" cy="279.8" r="5.4" fill="none" stroke="#d4d4d4" stroke-width="1.4" stroke-dasharray="1.1 1.2"/>
<path d="M34.3,270.4L35.1,271.2L30.8,277.9L29,276.7Z" fill="#e2e2e2"/>
<path d="M31.6,279.3C31.6,282.8 27.3,285.5 22,284.9C24.1,283.3 25,279.8 27.5,278.1C29.2,277 31.6,277.7 31.6,279.3Z" fill="#e2e2e2"/>
<!-- eyedropper 2 -->
<g stroke-linecap="round" fill="none">
<path d="M17.4,313.8L24.4,307" stroke="#e2e2e2" stroke-width="4.4"/>
<path d="M17.6,313.6L23.3,308" stroke="#535353" stroke-width="1.8"/>
<path d="M25.5,306L31,300.9" stroke="#e2e2e2" stroke-width="3.8"/>
<path d="M23.2,303.6L28.1,308.4" stroke="#e2e2e2" stroke-width="3"/>
</g>
<path d="M13,299.5L15,298.8L18.8,300.5V306.2L14.5,306.4L13,305Z" fill="#a8a8a8"/>
<g fill="#6a6a6a"><rect x="14" y="300.5" width="1" height="1"/><rect x="16" y="302" width="1" height="1"/><rect x="14" y="303.5" width="1" height="1"/><rect x="16.5" y="304.5" width="1" height="1"/></g>
<!-- brush -->
<path d="M31.6,327.7L32.7,328.7L25.9,338.7L22.9,336.3Z" fill="#e2e2e2"/>
<path d="M25.1,339.7C25.1,343.6 20.8,345.7 16.1,345C17.8,343.4 18.3,339.9 20.7,338.4C22.6,337.3 25.1,338 25.1,339.7Z" fill="#e2e2e2"/>
<!-- stamp -->
<g fill="#e2e2e2">
<circle cx="23.9" cy="360.3" r="3.4"/>
<rect x="23" y="362.5" width="1.8" height="5.5"/>
<path d="M16.7,371.4V369.2Q16.7,367.8 18.5,367.8H29Q30.8,367.8 30.8,369.2V371.4Z"/>
<rect x="17.2" y="372.9" width="12.9" height="1.3"/>
</g>
<!-- eraser -->
<g transform="translate(23.9,395.3) rotate(-45)">
<rect x="-7.4" y="-3.5" width="14.8" height="7" rx="1" fill="#e2e2e2"/>
<rect x="-6.1" y="-2.2" width="4.2" height="4.4" fill="#535353"/>
</g>
<rect x="19.5" y="401.4" width="12.3" height="1.4" fill="#d8d8d8"/>
<!-- bucket 2 -->
<g fill="none" stroke="#e2e2e2" stroke-width="1.4">
<path d="M16.9,426.8L23.9,420.2L30.6,426.6L23.5,432.6Z"/>
<circle cx="21.6" cy="418.6" r="1.5" stroke-width="1.1"/>
<path d="M22.3,419.8L24.8,423.8" stroke-width="1.1"/>
</g>
<g fill="#e2e2e2"><circle cx="24.8" cy="424" r="1"/><path d="M31.3,426.8C32.5,428.2 34,429 34,430.2A1.8,1.8 0 0 1 30.4,430.2C30.4,429 31,428 31.3,426.8Z"/></g>
<path d="M13.2,415.5L14.5,414L18.8,416V422.4L15,422L13.2,421Z" fill="#a8a8a8"/>
<g fill="#6a6a6a"><rect x="14.2" y="416.5" width="1" height="1"/><rect x="16.3" y="418" width="1" height="1"/><rect x="14.3" y="419.5" width="1" height="1"/></g>
<!-- T -->
<g fill="#e2e2e2">
<rect x="16.9" y="445.6" width="14.9" height="1.9"/>
<rect x="16.9" y="445.6" width="1.6" height="4.4"/>
<rect x="30.2" y="445.6" width="1.6" height="4.4"/>
<rect x="23.4" y="445.6" width="2.2" height="14"/>
<rect x="20.2" y="459" width="8.7" height="1.5"/>
</g>
<!-- red box / selected pen -->
<path d="M0,461.5H48.2V504H0Z M5.4,467.3V498.5H42.4V467.3Z" fill="#ff0000" fill-rule="evenodd"/>
<rect x="5.4" y="467.3" width="37" height="31.2" fill="#575757"/>
<rect x="6.9" y="468.8" width="34" height="26.2" fill="#333333"/>
<g fill="none" stroke="#e2e2e2" stroke-width="1.3" stroke-linejoin="round">
<path d="M17.5,488.8C17.6,484.6 20.6,479.6 25,476.8L29.2,481C26.4,485.4 22,488.6 17.5,488.8Z"/>
<path d="M17.8,488.5L23.2,483.1" stroke-width="1"/>
</g>
<path d="M25.9,475.9L28.1,473.7L32.4,477.9L30.1,480.2Z" fill="#e2e2e2"/>
<circle cx="23.6" cy="482.6" r="1.2" fill="#e2e2e2"/>
<path d="M38.2,488.5V492H34.7Z" fill="#bdbdbd"/>
<!-- path select arrow -->
<path d="M18.1,504.2L29.2,511.9L23.6,512.6L26.6,518.8L24.8,519.6L21.8,513.5L18.1,517.2Z" fill="#e8e8e8"/>
<!-- rect -->
<rect x="16.1" y="533.3" width="16" height="12.5" fill="#6a6a6a" stroke="#e2e2e2" stroke-width="1.6"/>
<!-- dots -->
<g fill="#e2e2e2"><circle cx="17.3" cy="568.9" r="1.9"/><circle cx="23.7" cy="568.9" r="1.9"/><circle cx="30.2" cy="568.9" r="1.9"/></g>
<!-- small swatches -->
<rect x="10.9" y="594.6" width="7.8" height="7.8" fill="#e8e8e8"/>
<rect x="8.2" y="591.2" width="6.3" height="6.5" fill="#111" stroke="#e8e8e8" stroke-width="1"/>
<!-- swap arrows -->
<g fill="none" stroke="#e2e2e2" stroke-width="1.6" stroke-linejoin="round"><path d="M29.2,592.4H32.6Q34.6,592.4 34.6,594.4V598.6"/></g>
<g fill="#e2e2e2"><path d="M26.4,592.4L29.6,589.6V595.2Z"/><path d="M34.6,601.9L31.8,598.5H37.4Z"/></g>
<!-- big swatches -->
<rect x="18.7" y="618.5" width="20.8" height="21.3" fill="#ffffff" stroke="#3a3a3a" stroke-width="0.8"/>
<rect x="8.2" y="608.2" width="19.6" height="20.1" fill="#000" stroke="#e8e8e8" stroke-width="1.3"/>
<rect x="7.2" y="607.3" width="21.6" height="22" fill="none" stroke="#2e2e2e" stroke-width="0.7"/>
</svg>

<div class="a" id="menu"><div class="a" id="hl"></div><div class="s" style="top:46px"></div><div class="s" style="top:77px"></div><div class="s" style="top:167px"></div><div class="s" style="top:199px"></div><div class="s" style="top:229px"></div><div class="s" style="top:319px"></div><div class="s" style="top:370px"></div><div class="s" style="top:421px"></div><div class="s" style="top:453px"></div><div class="i" style="top:2.9px">Vectormasker maken</div><div class="i" style="top:21.6px">Pad verwijderen</div><div class="i h" style="top:52.8px">Aangepaste vorm definiëren...</div><div class="i" style="top:85.0px">Selectie maken...</div><div class="i d" style="top:104.5px">Nieuwe hulplijnen van vorm</div><div class="i" style="top:123.4px">Pad vullen...</div><div class="i" style="top:142.3px">Pad omlijnen...</div><div class="i d" style="top:174.7px">Uitknippad...</div><div class="i" style="top:206.0px">Pad vrije transformatie</div><div class="i d" style="top:237.1px">Vormen verenigen</div><div class="i d" style="top:256.8px">Voorste vorm verwijderen</div><div class="i d" style="top:275.9px">Vormen verenigen bij overlapping</div><div class="i d" style="top:294.7px">Vormen verwijderen bij overlapping</div><div class="i d" style="top:326.5px">Vulling kopiëren</div><div class="i d" style="top:346.2px">Volledige lijn kopiëren</div><div class="i d" style="top:377.6px">Vulling plakken</div><div class="i d" style="top:396.6px">Volledige lijn plakken</div><div class="i" style="top:428.7px">Lagen isoleren</div><div class="i" style="top:460.3px">Symmetriepad maken</div><div class="i d" style="top:480.0px">Symmetriepad uitschakelen</div></div>
</body></html>
